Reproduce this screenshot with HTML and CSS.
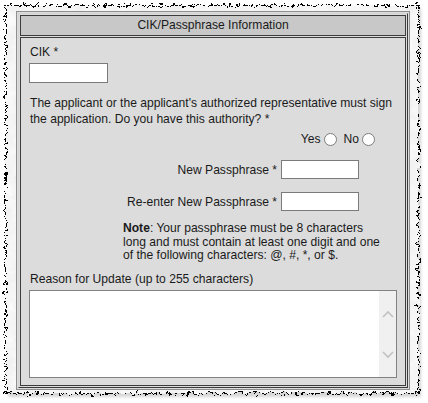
FILE: index.html
```html
<!DOCTYPE html>
<html>
<head>
<meta charset="utf-8">
<title>CIK/Passphrase Information</title>
<link rel="stylesheet" href="styles.css">
</head>
<body>
<div class="page">
  <svg class="torn" width="428" height="403" viewBox="0 0 428 403" aria-hidden="true">
    <defs>
      <filter id="tear" x="-5%" y="-5%" width="110%" height="110%">
        <feTurbulence type="fractalNoise" baseFrequency="0.22" numOctaves="3" seed="7" result="noise"/>
        <feDisplacementMap in="SourceGraphic" in2="noise" scale="9" xChannelSelector="R" yChannelSelector="G"/>
      </filter>
      <filter id="paper" x="0" y="0" width="100%" height="100%">
        <feTurbulence type="fractalNoise" baseFrequency="0.07" numOctaves="4" seed="3" result="n"/>
        <feColorMatrix in="n" type="matrix" values="0.16 0 0 0 0.835  0.16 0 0 0 0.835  0.16 0 0 0 0.835  0 0 0 0 1" result="g"/>
        <feComposite in="g" in2="SourceAlpha" operator="in"/>
      </filter>
      <filter id="shade" x="-5%" y="-5%" width="115%" height="115%">
        <feGaussianBlur stdDeviation="1.5"/>
      </filter>
    </defs>
    <rect x="8" y="8" width="413" height="389" fill="#9a9a9a" opacity="0.4" filter="url(#shade)"/>
    <g filter="url(#tear)">
      <rect x="5.5" y="5.5" width="413" height="388" fill="#e8e8e8" filter="url(#paper)"/>
      <rect x="5.5" y="5.5" width="413" height="388" fill="none" stroke="#000" stroke-width="1"/>
    </g>
  </svg>

  <div class="frame">
    <div class="table">
      <div class="head">CIK/Passphrase Information</div>
      <div class="body">
        <div class="label">CIK *</div>
        <div class="field cik"></div>
        <p class="question">The applicant or the applicant's authorized representative must sign<br>the application. Do you have this authority? *</p>
        <div class="yesno">
          <span>Yes</span><span class="radio"></span>
          <span class="no">No</span><span class="radio"></span>
        </div>
        <div class="pass-row">
          <span class="pass-label">New Passphrase *</span>
          <span class="field pass"></span>
        </div>
        <div class="pass-row second">
          <span class="pass-label">Re-enter New Passphrase *</span>
          <span class="field pass"></span>
        </div>
        <p class="note"><b>Note</b>: Your passphrase must be 8 characters<br>long and must contain at least one digit and one<br>of the following characters: @, #, *, or $.</p>
        <div class="label reason">Reason for Update (up to 255 characters)</div>
        <div class="textarea">
          <div class="scrollbar">
            <svg width="12" height="8" viewBox="0 0 12 8"><path d="M1 7 L6 2 L11 7" fill="none" stroke="#c2c2c2" stroke-width="1.6"/></svg>
            <svg width="12" height="8" viewBox="0 0 12 8"><path d="M1 1 L6 6 L11 1" fill="none" stroke="#c2c2c2" stroke-width="1.6"/></svg>
          </div>
        </div>
      </div>
    </div>
  </div>
</div>
</body>
</html>
```
FILE: styles.css
```css
* { box-sizing: border-box; }

html, body {
  margin: 0;
  padding: 0;
  background: #ffffff;
}

.page {
  position: relative;
  width: 428px;
  height: 403px;
  padding: 11px 0 0 16px;
  font-family: "Liberation Sans", Arial, sans-serif;
  font-size: 12.1px;
  color: #1a1a1a;
  overflow: hidden;
}

.torn {
  position: absolute;
  left: 0;
  top: 0;
}

.frame {
  position: relative;
  width: 394px;
  border: 1px solid #8e8e8e;
  padding: 1px;
  background: #dcdcdc;
}

.table {
  border: 1px solid;
  border-color: #d4d4d4 #3a3a3a #3a3a3a #d4d4d4;
  padding: 1px;
  display: flex;
  flex-direction: column;
  gap: 1px;
}

.head {
  height: 21px;
  border: 1px solid #3c3c3c;
  background: #c8c8c8;
  text-align: center;
  line-height: 19px;
}

.body {
  border: 1px solid #3c3c3c;
  background: #dcdcdc;
  padding: 6px 8px 7px 8px;
  display: flex;
  flex-direction: column;
}

.label {
  line-height: 16px;
  padding-left: 1px;
}

.field {
  display: block;
  background: #ffffff;
  border: 1px solid #7a7a7a;
}

.cik {
  width: 79px;
  height: 20px;
  margin-top: 3px;
}

.question {
  margin: 12px 0 0 0;
  padding-left: 1px;
  line-height: 16px;
  white-space: nowrap;
}

.yesno {
  margin-top: 4px;
  height: 16px;
  display: flex;
  align-items: center;
  justify-content: flex-end;
  padding-right: 22px;
}

.radio {
  display: inline-block;
  width: 13px;
  height: 13px;
  border-radius: 50%;
  border: 1px solid #7c7c7c;
  background: #ffffff;
  margin-left: 3px;
}

.no {
  margin-left: 7px;
}

.pass-row {
  margin-top: 13px;
  height: 19px;
  display: flex;
  align-items: center;
  justify-content: flex-end;
  gap: 4px;
  padding-right: 38px;
}

.pass {
  width: 78px;
  height: 19px;
}

.note {
  margin: 11px 0 0 94px;
  line-height: 13.7px;
  white-space: nowrap;
}

.note b {
  font-weight: bold;
}

.reason {
  margin-top: 8px;
}

.textarea {
  margin-top: 3px;
  width: 368px;
  height: 88px;
  background: #ffffff;
  border: 1px solid #828282;
  display: flex;
  justify-content: flex-end;
}

.scrollbar {
  width: 17px;
  height: 100%;
  background: #f0f0f0;
  display: flex;
  flex-direction: column;
  align-items: center;
  justify-content: space-between;
  padding: 19px 0 18px 0;
}
```
